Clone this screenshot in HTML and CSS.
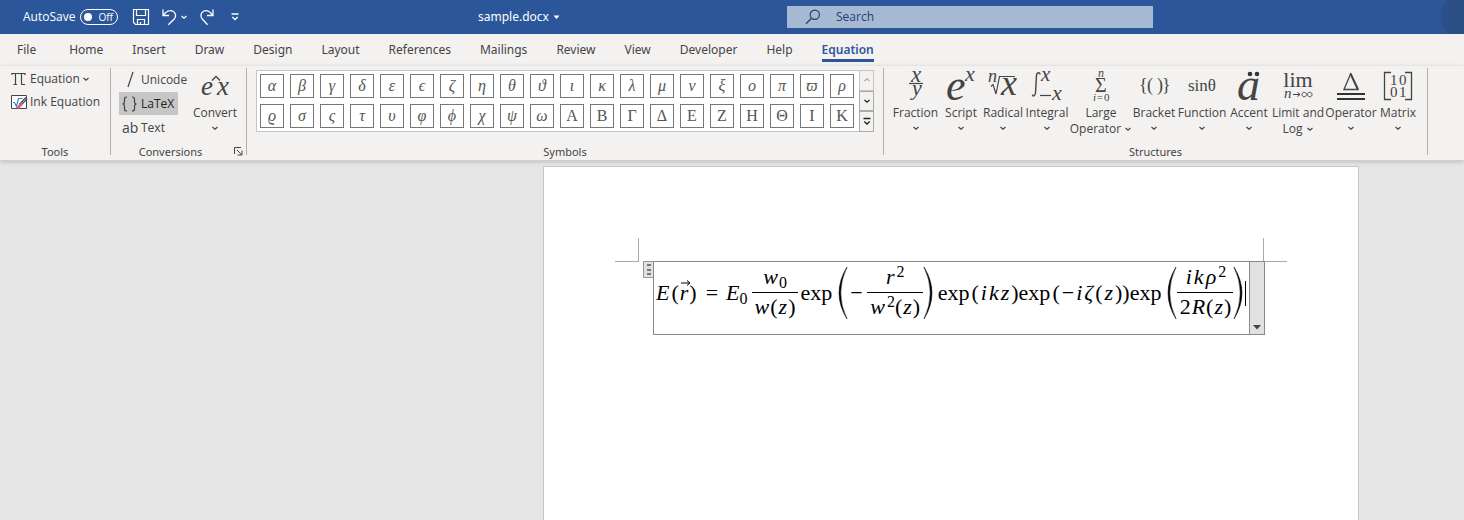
FILE: index.html
```html
<!DOCTYPE html>
<html lang="en">
<head>
<meta charset="utf-8">
<title>sample.docx</title>
<link rel="stylesheet" href="styles.css">
</head>
<body>
<svg class="defs" aria-hidden="true">
  <symbol id="chev" viewBox="0 0 8 8"><path d="M1.500 3 4 5.300 6.500 3" fill="none" stroke="currentColor" stroke-width="1.200"/></symbol>
</svg>

<header class="titlebar">
  <div class="quick">
    <label class="autosave">AutoSave
      <span class="pill"><input type="checkbox" class="knob">Off</span>
    </label>
    <button class="qbtn save" aria-label="Save"><svg width="18" height="18" viewBox="0 0 18 18"><path d="M1.500 1.500h15v15h-13l-2-2zM4.500 1.500v6h9v-6M5.500 16.500v-5h7v5M8.500 16.500v-2.500" fill="none" stroke="#fff" stroke-width="1.200"/></svg></button>
    <button class="qbtn undo" aria-label="Undo"><svg width="18" height="18" viewBox="0 0 18 18"><path d="M2 1.500v6h6M2.300 7.200C5 3.500 9 1.600 12 3.200c3 1.700 3.400 5.300 1.200 7.800L7.300 16.800" fill="none" stroke="#fff" stroke-width="1.300"/></svg><svg width="8" height="8"><use href="#chev"/></svg></button>
    <button class="qbtn redo" aria-label="Redo"><svg width="16" height="18" viewBox="0 0 16 18"><path d="M14 1.500v6H8M13.700 7.200C11 3.500 7.500 1.600 4.500 3.200c-3 1.700-3.400 5.300-1.200 7.800L8.500 16.800" fill="none" stroke="#fff" stroke-width="1.300"/></svg></button>
    <button class="qbtn" aria-label="Customize"><svg width="8" height="10" viewBox="0 0 8 10"><path d="M.5 2h7M1.300 5 4 7.500 6.700 5" fill="none" stroke="#fff" stroke-width="1.300"/></svg></button>
  </div>
  <button class="docname">sample.docx <svg width="7" height="5" viewBox="0 0 7 5"><path d="M.5.5h6l-3 3.500z" fill="#fff"/></svg></button>
  <div class="search">
    <svg width="16" height="16" viewBox="0 0 16 16"><circle cx="9.800" cy="5.800" r="4.600" fill="none" stroke="#1f3f77" stroke-width="1.200"/><path d="M6.500 9.200 1 14.800" stroke="#1f3f77" stroke-width="1.300"/></svg>
    <input type="text" placeholder="Search" aria-label="Search">
  </div>
</header>

<nav class="tabs">
  <button>File</button><button>Home</button><button>Insert</button><button>Draw</button><button>Design</button><button>Layout</button><button>References</button><button>Mailings</button><button>Review</button><button>View</button><button>Developer</button><button>Help</button><button class="active">Equation</button>
</nav>

<main>
<div class="ribbon">
  <section class="group tools">
    <div class="body">
      <button class="row"><svg width="16" height="16" viewBox="0 0 16 16"><path d="M1 4V2.500h13V4M4.500 2.500v11M10.500 2.500v11M2.500 13.500h3.500M10.500 13.500h3.500" fill="none" stroke="#444" stroke-width="1.200"/></svg>Equation <svg class="chev" width="8" height="8"><use href="#chev"/></svg></button>
      <button class="row"><svg width="16" height="16" viewBox="0 0 16 16"><path d="M.5 1.500h15v13H.5z" fill="#fff" stroke="#444"/><path d="M2 8.500h1.500l2 4 2-8h4" fill="none" stroke="#2b88d8" stroke-width="1.200"/><path d="M15.500 4 9 11" stroke="#444" stroke-width="3"/><path d="M15 4.500 9.500 10.500" stroke="#ddd" stroke-width=".8"/><path d="M10.500 9.500 6.500 14.500" stroke="#e3545c" stroke-width="2.600"/></svg>Ink Equation</button>
    </div>
    <h2>Tools</h2>
  </section>

  <section class="group conversions">
    <div class="body">
      <div class="modes">
        <button class="mode"><svg width="18" height="16" viewBox="0 0 18 16"><path d="M11 0 6 15" stroke="#444" stroke-width="1.200"/></svg>Unicode</button>
        <button class="mode selected"><svg width="18" height="16" viewBox="0 0 18 16"><path d="M5 1C3 1 2.500 1.500 2.500 3v2.500C2.500 7 2 8 .5 8 2 8 2.500 9 2.500 10.500V13c0 1.500.5 2 2.500 2M10 1c2 0 2.500.5 2.500 2v2.500c0 1.500.5 2.500 2 2.500-1.500 0-2 1-2 2.500V13c0 1.500-.5 2-2.500 2" fill="none" stroke="#444" stroke-width="1.200"/></svg>LaTeX</button>
        <button class="mode"><span class="ab">ab</span>Text</button>
      </div>
      <button class="big convert"><svg width="34" height="32" viewBox="0 0 34 32"><g class="mi"><text x="3" y="25" font-size="27">e</text><text x="19" y="25" font-size="27">x</text></g><path d="M14 10.500 18 6.500l4 4" fill="none" stroke="#444" stroke-width="1.400"/></svg><span>Convert</span><svg class="chev" width="8" height="8"><use href="#chev"/></svg></button>
    </div>
    <h2>Conversions</h2>
    <button class="launcher" aria-label="Conversion options"><svg width="9" height="9" viewBox="0 0 9 9"><path d="M.5 7V.5H7M3 3l4.500 4.500M8 3.500V8H3.500" fill="none" stroke="#444"/></svg></button>
  </section>

  <section class="group symbols">
    <div class="body">
      <div class="gallery">
        <div class="cells">
          <button>α</button><button>β</button><button>γ</button><button>δ</button><button>ε</button><button>ϵ</button><button>ζ</button><button>η</button><button>θ</button><button>ϑ</button><button>ι</button><button>κ</button><button>λ</button><button>μ</button><button>ν</button><button>ξ</button><button>ο</button><button>π</button><button>ϖ</button><button>ρ</button>
          <button>ϱ</button><button>σ</button><button>ς</button><button>τ</button><button>υ</button><button>φ</button><button>ϕ</button><button>χ</button><button>ψ</button><button>ω</button><button class="up">Α</button><button class="up">Β</button><button class="up">Γ</button><button class="up">Δ</button><button class="up">Ε</button><button class="up">Ζ</button><button class="up">Η</button><button class="up">Θ</button><button class="up">Ι</button><button class="up">Κ</button>
        </div>
        <div class="scroller">
          <button class="off" aria-label="Scroll up"><svg width="8" height="8" viewBox="0 0 8 8"><path d="M1.500 5 4 2.700 6.500 5" fill="none" stroke="#aaa" stroke-width="1.200"/></svg></button>
          <button aria-label="Scroll down"><svg width="8" height="8"><use href="#chev"/></svg></button>
          <button aria-label="More symbols"><svg width="8" height="10" viewBox="0 0 8 10"><path d="M.5 1.500h7M1.300 4.500 4 7 6.700 4.500" fill="none" stroke="#222" stroke-width="1.300"/></svg></button>
        </div>
      </div>
    </div>
    <h2>Symbols</h2>
  </section>

  <section class="group structures">
    <div class="body">
      <button class="big"><svg width="34" height="32" viewBox="0 0 34 32"><g class="mi"><text x="12" y="12" font-size="23">x</text><text x="13" y="25" font-size="22">y</text></g><path d="M10 13.500h14" stroke="#444" stroke-width="1.200"/></svg><span>Fraction</span><svg class="chev" width="8" height="8"><use href="#chev"/></svg></button>
      <button class="big"><svg width="34" height="32" viewBox="0 0 34 32"><g class="mi"><text x="2" y="30" font-size="44">e</text><text x="21" y="11" font-size="22">x</text></g></svg><span>Script</span><svg class="chev" width="8" height="8"><use href="#chev"/></svg></button>
      <button class="big"><svg width="34" height="32" viewBox="0 0 34 32"><g class="mi"><text x="2" y="12" font-size="18">n</text><text x="15" y="25" font-size="36">x</text></g><path d="M5 16.500 7 14.500 10 24 13.500 6.500H29" fill="none" stroke="#444" stroke-width="1.200"/></svg><span>Radical</span><svg class="chev" width="8" height="8"><use href="#chev"/></svg></button>
      <button class="big"><svg width="34" height="32" viewBox="0 0 34 32"><path d="M10 4.500c0-2.500-3-2.500-3.500.5L5.500 23c-.3 3-3 4-3 1.500" fill="none" stroke="#444" stroke-width="1.400"/><g class="mi"><text x="11" y="11" font-size="21">x</text><text x="22" y="30" font-size="22">x</text></g><path d="M10 25.500h11" stroke="#444" stroke-width="1.200"/></svg><span>Integral</span><svg class="chev" width="8" height="8"><use href="#chev"/></svg></button>
      <button class="big"><svg width="34" height="32" viewBox="0 0 34 32"><g class="mi"><text x="14" y="7" font-size="12">n</text><text x="9" y="31" font-size="11">i</text></g><g class="mr"><text x="11" y="22" font-size="20">Σ</text><text x="13" y="31" font-size="10">=</text><text x="20" y="31" font-size="11">0</text></g></svg><span>Large<br>Operator <svg class="chev" width="8" height="8"><use href="#chev"/></svg></span></button>
      <button class="big"><svg width="34" height="32" viewBox="0 0 34 32"><g class="mr"><text x="2" y="21" font-size="18">{</text><text x="10" y="21" font-size="18">(</text><text x="20" y="21" font-size="18">)</text><text x="25" y="21" font-size="18">}</text></g></svg><span>Bracket</span><svg class="chev" width="8" height="8"><use href="#chev"/></svg></button>
      <button class="big"><svg width="34" height="32" viewBox="0 0 34 32"><text class="mr" x="17" y="21" font-size="17" text-anchor="middle">sinθ</text></svg><span>Function</span><svg class="chev" width="8" height="8"><use href="#chev"/></svg></button>
      <button class="big"><svg width="34" height="32" viewBox="0 0 34 32"><text class="mi" x="5" y="30" font-size="46">a</text><circle cx="18" cy="4" r="2.300" fill="#333"/><circle cx="25" cy="4" r="2.300" fill="#333"/></svg><span>Accent</span><svg class="chev" width="8" height="8"><use href="#chev"/></svg></button>
      <button class="big"><svg width="34" height="32" viewBox="0 0 34 32"><text class="mr" x="17" y="17" font-size="22" text-anchor="middle">lim</text><text class="mi" x="3" y="28" font-size="15">n</text><path d="M12 24.500h7M16.500 22.500l2.500 2-2.500 2" fill="none" stroke="#444"/><path d="M26 24.500c-2-3.500-5-2.500-5 0s3 3.500 5 0 5-2.500 5 0-3 3.500-5 0" fill="none" stroke="#444"/></svg><span>Limit and<br>Log <svg class="chev" width="8" height="8"><use href="#chev"/></svg></span></button>
      <button class="big"><svg width="34" height="32" viewBox="0 0 34 32"><path d="M10 19.500 16.500 4l7.500 15.500z" fill="none" stroke="#444" stroke-width="1.300"/><path d="m16.500 3.500 7.500 16" stroke="#444" stroke-width="2"/><path d="M3 24h28M3 29h28" stroke="#333" stroke-width="2"/></svg><span>Operator</span><svg class="chev" width="8" height="8"><use href="#chev"/></svg></button>
      <button class="big"><svg width="34" height="32" viewBox="0 0 34 32"><path d="M10 2.500H3.500v27H10M24 2.500h6.500v27H24" fill="none" stroke="#444" stroke-width="1.300"/><g class="mr"><text x="9" y="15" font-size="15">1</text><text x="18" y="15" font-size="15">0</text><text x="9" y="27" font-size="15">0</text><text x="18" y="27" font-size="15">1</text></g></svg><span>Matrix</span><svg class="chev" width="8" height="8"><use href="#chev"/></svg></button>
    </div>
    <h2>Structures</h2>
  </section>
</div>

<div class="workspace">
  <article class="page">
    <div class="crops"><span class="crop left"></span><span class="crop right"></span></div>
    <div class="eqrow">
      <button class="handle" aria-label="Move equation"><i></i><i></i><i></i></button>
      <div class="eqbox">
        <div class="math">
          <span class="fn"><i>E</i></span>
          <span class="arg">(<i class="vec">r<svg width="10" height="6" viewBox="0 0 10 6"><path d="M0 3h9M6 .5 9 3 6 5.500" fill="none" stroke="#000"/></svg></i>)</span>
          <span class="eq">=</span>
          <span class="e0"><i>E</i><sub>0</sub></span>
          <span class="frac f1"><span><i>w</i><sub>0</sub></span><span><i>w</i>(<i>z</i>)</span></span>
          <span class="op">exp</span>
          <svg class="paren" width="11" height="54" viewBox="0 0 11 54"><path d="M10 1Q-6 27 10 53Q-2.500 27 10 1z" stroke="#000" stroke-width=".5"/></svg>
          <span class="minus">−</span>
          <span class="frac f2"><span><i>r</i><sup>2</sup></span><span><i>w</i><sup>2</sup>(<i>z</i>)</span></span>
          <svg class="paren" width="11" height="54" viewBox="0 0 11 54"><path d="M1 1Q17 27 1 53Q13.500 27 1 1z" stroke="#000" stroke-width=".5"/></svg>
          <span class="op">exp</span>
          <span class="arg wide">(<i>i</i><i>k</i><i>z</i>)</span>
          <span class="op">exp</span>
          <span class="arg wide">(<b>−</b><i>i</i><i>ζ</i><b>(</b><i>z</i><b>))</b></span>
          <span class="op">exp</span>
          <svg class="paren" width="11" height="54" viewBox="0 0 11 54"><path d="M10 1Q-6 27 10 53Q-2.500 27 10 1z" stroke="#000" stroke-width=".5"/></svg>
          <span class="frac f3"><span><i>i</i><i>k</i><i>ρ</i><sup>2</sup></span><span>2<i>R</i>(<i>z</i>)</span></span>
          <svg class="paren" width="11" height="54" viewBox="0 0 11 54"><path d="M1 1Q17 27 1 53Q13.500 27 1 1z" stroke="#000" stroke-width=".5"/></svg>
          <span class="caret"></span>
        </div>
        <button class="options" aria-label="Equation options"><svg width="8" height="5" viewBox="0 0 8 5"><path d="M0 0h8L4 4.500z" fill="#444"/></svg></button>
      </div>
    </div>
  </article>
</div>
</main>
</body>
</html>
```
FILE: styles.css
```css
* { box-sizing: border-box; }
body {
  margin: 0;
  min-height: 100vh;
  display: flex;
  flex-direction: column;
  background: #e6e6e6;
  color: #444;
  font: 12px/16px "Open Sans", "Noto Sans", sans-serif;
}
button {
  border: 0;
  padding: 0;
  background: none;
  color: inherit;
  font: inherit;
  white-space: nowrap;
}
svg { display: block; flex: none; overflow: visible; }
.defs { width: 0; height: 0; position: absolute; }
main { flex: 1; display: flex; flex-direction: column; }

.titlebar {
  display: grid;
  grid-template-columns: 478fr 309fr 366fr 311fr;
  align-items: center;
  height: 34px;
  color: #fff;
  background: radial-gradient(circle at 100% 50%, #2b4f86 23px, transparent 24px), #2b579a;
}
.quick { display: flex; align-items: center; padding-left: 23px; }
.autosave { display: flex; align-items: center; gap: 5px; }
.pill {
  display: flex;
  align-items: center;
  gap: 6px;
  width: 38px;
  height: 16px;
  padding-left: 3px;
  border: 1px solid #fff;
  border-radius: 8px;
  font-size: 10px;
}
.knob {
  appearance: none;
  width: 8px;
  height: 8px;
  margin: 0;
  border-radius: 50%;
  background: #fff;
}
.qbtn { display: flex; align-items: center; gap: 1px; }
.save { margin-left: 14px; }
.undo { margin-left: 11px; }
.redo { margin: 0 16px 0 11px; }
.docname { display: flex; align-items: center; gap: 4px; font-family: "Noto Sans", sans-serif; }
.search {
  display: flex;
  align-items: center;
  gap: 15px;
  height: 22px;
  padding-left: 18px;
  background: #a6b9d3;
}
.search input {
  flex: 1;
  min-width: 0;
  padding: 0;
  border: 0;
  outline: 0;
  background: none;
  font: inherit;
  color: #1f3f77;
}
.search input::placeholder { color: #1f3f77; opacity: 1; }

.tabs {
  display: flex;
  gap: 29px;
  height: 32px;
  padding: 6px 17px 0;
  background: #f3f2f1;
}
.tabs button { height: 22px; padding-bottom: 3px; font-family: "Noto Sans", sans-serif; }
.tabs button:first-child { margin-right: 4px; }
.tabs .active { border-bottom: 3px solid #2b579a; padding-bottom: 0; color: #2b579a; font-weight: 600; }

.ribbon {
  display: flex;
  height: 95px;
  background: #f3f2f1;
  border-bottom: 1px solid #d0d0d0;
  box-shadow: 0 1px 4px #bbb;
}
.group {
  position: relative;
  display: flex;
  flex-direction: column;
  justify-content: space-between;
  margin: 2px 0 5px;
  border-right: 1px solid #b3b0ad;
}
.group h2 {
  margin: 0;
  text-align: center;
  font: 400 11px/18px "Noto Sans", sans-serif;
  height: 12px;
}
.body { display: flex; }
.tools { width: 111px; }
.tools .body { flex-direction: column; gap: 7px; padding: 3px 0 0 11px; }
.row { display: flex; align-items: center; gap: 3px; }
.row .chev { margin-left: -1px; }
.conversions { width: 136px; }
.conversions h2 { padding-right: 16px; }
.conversions .body { padding-left: 8px; gap: 9px; }
.modes { display: flex; flex-direction: column; gap: 1px; width: 66px; }
.mode { display: flex; align-items: center; gap: 1px; height: 23px; padding-left: 3px; }
.mode.selected { background: #c6c6c6; color: #222; width: 59px; }
.mode .ab { width: 18px; font-size: 14px; text-align: left; }
.launcher { position: absolute; right: 3px; bottom: -1px; }
.convert { width: 42px; }
.big { display: flex; flex-direction: column; align-items: center; padding-top: 2px; }
.big > span { margin-top: 3px; }
.big > .chev { margin-top: 3px; }
.big span .chev { display: inline-block; }
.mi, .mr { fill: #444; font-family: "Liberation Serif", serif; }
.mi { font-style: italic; }

.symbols { flex: 1 1 637px; }
.symbols .body { padding: 2px 9px 0; }
.gallery { display: flex; flex: 1; border: 1px solid #c8c6c4; background: #fff; }
.cells {
  flex: 1;
  display: grid;
  grid-template-columns: repeat(20, 24px);
  justify-content: space-between;
  row-gap: 6px;
  padding: 3px 6px 3px 3px;
}
.cells button {
  height: 24px;
  border: 1px solid #777;
  color: #555;
  font: italic 16px/20px "Liberation Serif", serif;
}
.cells .up { font-style: normal; }
.scroller { display: flex; flex-direction: column; width: 15px; margin: -1px; background: #f3f2f1; }
.scroller button {
  flex: 1;
  display: flex;
  align-items: center;
  justify-content: center;
  border: 1px solid #ababab;
  color: #222;
}
.scroller .off { border-color: #c8c6c4; }

.structures { flex: 0 0 544px; margin-right: 36px; }
.structures .body {
  display: grid;
  grid-template-columns: 51px 40px 44px 44px 64px 42px 54px 40px 58px 48px 46px;
  padding-left: 6px;
  align-items: start;
}

.workspace { flex: 1; display: grid; grid-template-columns: 543fr 816fr 105fr; padding-top: 5px; }
.page { grid-column: 2; padding-top: 71px; background: #fff; border: 1px solid #c6c6c6; border-bottom: 0; }
.crops { display: flex; justify-content: space-between; padding: 0 71px; }
.crop { width: 24px; height: 24px; border: 0 solid #ababab; border-bottom-width: 1px; }
.crop.left { border-right-width: 1px; }
.crop.right { border-left-width: 1px; }
.eqrow { display: flex; align-items: flex-start; margin: -1px 93px 0 99px; }
.handle {
  display: flex;
  flex-direction: column;
  align-items: center;
  justify-content: space-evenly;
  width: 11px;
  height: 17px;
  margin-right: -1px;
  border: 1px solid #999;
  background: #e1e1e1;
}
.handle i { width: 4px; height: 2px; background: #777; }
.eqbox { flex: 1; display: flex; height: 74px; border: 1px solid #8a8a8a; }
.options {
  display: flex;
  align-items: flex-end;
  justify-content: center;
  width: 15px;
  padding-bottom: 4px;
  border-left: 1px solid #8a8a8a;
  background: #e1e1e1;
}
.math {
  flex: 1;
  display: flex;
  align-items: center;
  height: 62px;
  padding-left: 2px;
  color: #000;
  font: 22px/26px "Liberation Serif", serif;
  white-space: nowrap;
}
.math sub, .math sup { font-size: 16px; line-height: 0; }
.math sub { vertical-align: -4px; }
.math sup { vertical-align: 7px; margin-left: 1px; }
.math b { font-weight: 400; }
.arg { display: flex; gap: 1px; margin-left: 2px; }
.wide { gap: 2px; }
.vec { position: relative; }
.vec svg { position: absolute; left: 1px; top: 0; }
.eq { margin: 0 8px 0 9px; }
.frac { display: flex; flex-direction: column; align-items: center; }
.frac > span { height: 30px; line-height: 28px; }
.frac > span:first-child { align-self: stretch; text-align: center; border-bottom: 1px solid #000; }
.frac i { margin: 0 1px; }
.f1 { width: 46px; margin: 0 3px 0 4px; }
.f2 { width: 56px; margin-left: 4px; }
.f3 { width: 56px; }
.op + .paren { margin-left: 5px; }
.paren + .op { margin-left: 4px; }
.minus { margin-left: 2px; }
.caret { width: 1px; height: 25px; margin-left: 1px; background: #000; }
```
